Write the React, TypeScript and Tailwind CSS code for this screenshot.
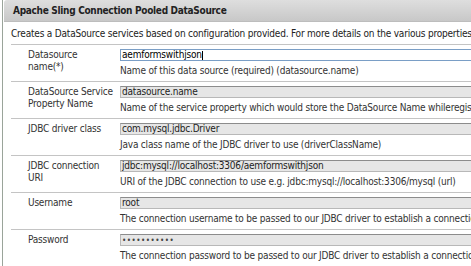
const font = { fontFamily: '"DejaVu Sans Condensed", "DejaVu Sans", Tahoma, sans-serif' };

type Row = {
  label: string[];
  value: string;
  help: string;
  focused?: boolean;
  secret?: boolean;
};

const ROWS: Row[] = [
  {
    label: ['Datasource', 'name(*)'],
    value: 'aemformswithjson',
    help: 'Name of this data source (required) (datasource.name)',
    focused: true,
  },
  {
    label: ['DataSource Service', 'Property Name'],
    value: 'datasource.name',
    help: 'Name of the service property which would store the DataSource Name whileregistering the DataSource service',
  },
  {
    label: ['JDBC driver class'],
    value: 'com.mysql.jdbc.Driver',
    help: 'Java class name of the JDBC driver to use (driverClassName)',
  },
  {
    label: ['JDBC connection', 'URI'],
    value: 'jdbc:mysql://localhost:3306/aemformswithjson',
    help: 'URI of the JDBC connection to use e.g. jdbc:mysql://localhost:3306/mysql (url)',
  },
  {
    label: ['Username'],
    value: 'root',
    help: 'The connection username to be passed to our JDBC driver to establish a connection. (username)',
  },
  {
    label: ['Password'],
    value: '•••••••••••',
    help: 'The connection password to be passed to our JDBC driver to establish a connection. (password)',
    secret: true,
  },
];

function ConfigRow({ row }: { row: Row }) {
  return (
    <div className="flex border-t border-[#c4c4c4] pt-[4px] pb-[4px] tracking-[-0.2px]">
      {/* label */}
      <div className="w-[109px] shrink-0 pl-[17px] text-[10px] leading-[12px] text-[#333] whitespace-nowrap">
        {row.label.map((l) => (
          <div key={l}>{l}</div>
        ))}
      </div>
      {/* value + help */}
      <div className="flex-1 flex flex-col">
        <div
          className={
            row.focused
              ? 'h-[12px] border border-[#7a9ec6] bg-white pl-[1px] text-[10px] leading-[10px] text-black'
              : 'h-[12px] border border-[#b8b8b8] border-t-[#8c8c8c] bg-[#e6e6e6] pl-[1px] text-[10px] leading-[10px] text-[#222]'
          }
        >
          {row.secret ? (
            <span className="text-[8px] tracking-[0.5px] text-[#444]">{row.value}</span>
          ) : (
            row.value
          )}
          {row.focused && <span className="inline-block w-px h-[9px] bg-black align-middle" />}
        </div>
        <div className="mt-[3px] text-[10px] leading-[13px] text-[#333] whitespace-nowrap">{row.help}</div>
      </div>
    </div>
  );
}

export default function App() {
  return (
    <div className="w-[471px] h-[266px] overflow-hidden bg-white" style={font}>
      <div className="h-full ml-[2px] border-l border-[#9aa49a] w-[700px]">
        {/* header */}
        <div className="h-[22px] ml-[1px] rounded-tl-[3px] bg-[linear-gradient(#dedede,#c8c8c8)] border-b border-[#bdbdbd] pl-[9px] flex items-center text-[10px] font-bold tracking-[-0.3px] text-[#222]">
          Apache Sling Connection Pooled DataSource
        </div>
        <div className="pl-[8px]">
          <div className="h-[22px] flex items-center text-[10px] tracking-[-0.2px] text-[#222] whitespace-nowrap">
            Creates a DataSource services based on configuration provided. For more details on the various properties, please refer to the documentation.
          </div>
          {ROWS.map((r) => (
            <ConfigRow key={r.label.join(' ')} row={r} />
          ))}
        </div>
      </div>
    </div>
  );
}
